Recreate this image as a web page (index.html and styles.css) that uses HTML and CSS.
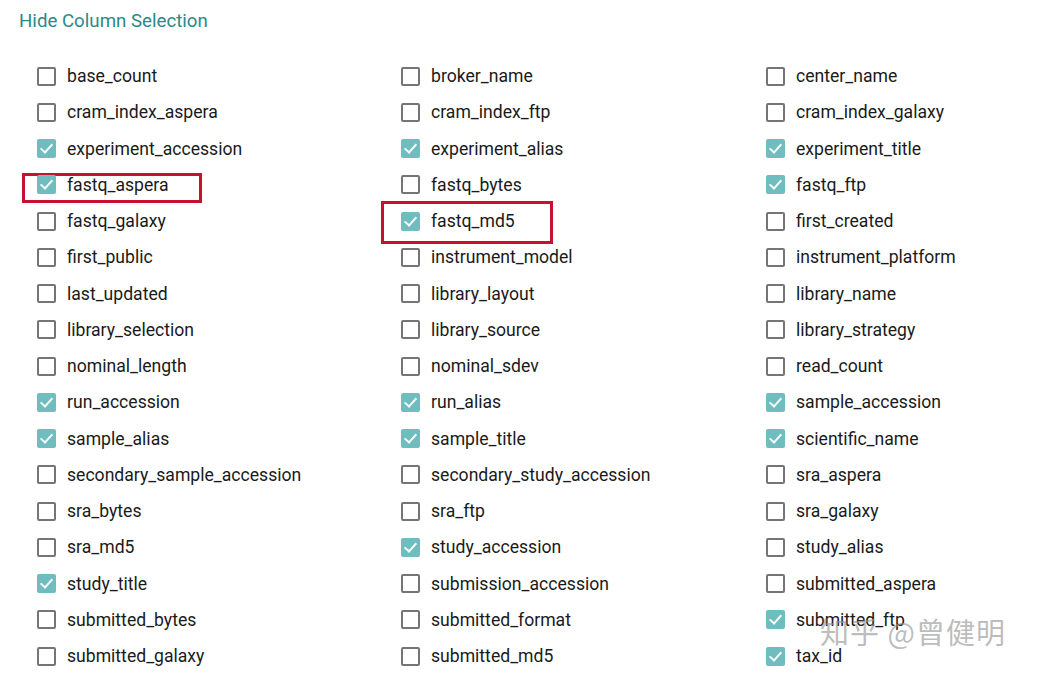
FILE: index.html
```html
<!DOCTYPE html>
<html>
<head>
<meta charset="utf-8">
<link rel="stylesheet" href="styles.css">
</head>
<body>
<div class="page">
  <a class="toggle">Hide Column Selection</a>
  <div class="grid">
    <label class="item"><span class="box"></span><span class="lbl">base_count</span></label>
    <label class="item"><span class="box"></span><span class="lbl">broker_name</span></label>
    <label class="item"><span class="box"></span><span class="lbl">center_name</span></label>

    <label class="item"><span class="box"></span><span class="lbl">cram_index_aspera</span></label>
    <label class="item"><span class="box"></span><span class="lbl">cram_index_ftp</span></label>
    <label class="item"><span class="box"></span><span class="lbl">cram_index_galaxy</span></label>

    <label class="item"><span class="box on"></span><span class="lbl">experiment_accession</span></label>
    <label class="item"><span class="box on"></span><span class="lbl">experiment_alias</span></label>
    <label class="item"><span class="box on"></span><span class="lbl">experiment_title</span></label>

    <label class="item"><span class="mark m1"></span><span class="box on"></span><span class="lbl">fastq_aspera</span></label>
    <label class="item"><span class="box"></span><span class="lbl">fastq_bytes</span></label>
    <label class="item"><span class="box on"></span><span class="lbl">fastq_ftp</span></label>

    <label class="item"><span class="box"></span><span class="lbl">fastq_galaxy</span></label>
    <label class="item"><span class="mark m2"></span><span class="box on"></span><span class="lbl">fastq_md5</span></label>
    <label class="item"><span class="box"></span><span class="lbl">first_created</span></label>

    <label class="item"><span class="box"></span><span class="lbl">first_public</span></label>
    <label class="item"><span class="box"></span><span class="lbl">instrument_model</span></label>
    <label class="item"><span class="box"></span><span class="lbl">instrument_platform</span></label>

    <label class="item"><span class="box"></span><span class="lbl">last_updated</span></label>
    <label class="item"><span class="box"></span><span class="lbl">library_layout</span></label>
    <label class="item"><span class="box"></span><span class="lbl">library_name</span></label>

    <label class="item"><span class="box"></span><span class="lbl">library_selection</span></label>
    <label class="item"><span class="box"></span><span class="lbl">library_source</span></label>
    <label class="item"><span class="box"></span><span class="lbl">library_strategy</span></label>

    <label class="item"><span class="box"></span><span class="lbl">nominal_length</span></label>
    <label class="item"><span class="box"></span><span class="lbl">nominal_sdev</span></label>
    <label class="item"><span class="box"></span><span class="lbl">read_count</span></label>

    <label class="item"><span class="box on"></span><span class="lbl">run_accession</span></label>
    <label class="item"><span class="box on"></span><span class="lbl">run_alias</span></label>
    <label class="item"><span class="box on"></span><span class="lbl">sample_accession</span></label>

    <label class="item"><span class="box on"></span><span class="lbl">sample_alias</span></label>
    <label class="item"><span class="box on"></span><span class="lbl">sample_title</span></label>
    <label class="item"><span class="box on"></span><span class="lbl">scientific_name</span></label>

    <label class="item"><span class="box"></span><span class="lbl">secondary_sample_accession</span></label>
    <label class="item"><span class="box"></span><span class="lbl">secondary_study_accession</span></label>
    <label class="item"><span class="box"></span><span class="lbl">sra_aspera</span></label>

    <label class="item"><span class="box"></span><span class="lbl">sra_bytes</span></label>
    <label class="item"><span class="box"></span><span class="lbl">sra_ftp</span></label>
    <label class="item"><span class="box"></span><span class="lbl">sra_galaxy</span></label>

    <label class="item"><span class="box"></span><span class="lbl">sra_md5</span></label>
    <label class="item"><span class="box on"></span><span class="lbl">study_accession</span></label>
    <label class="item"><span class="box"></span><span class="lbl">study_alias</span></label>

    <label class="item"><span class="box on"></span><span class="lbl">study_title</span></label>
    <label class="item"><span class="box"></span><span class="lbl">submission_accession</span></label>
    <label class="item"><span class="box"></span><span class="lbl">submitted_aspera</span></label>

    <label class="item"><span class="box"></span><span class="lbl">submitted_bytes</span></label>
    <label class="item"><span class="box"></span><span class="lbl">submitted_format</span></label>
    <label class="item"><span class="box on"></span><span class="lbl">submitted_ftp</span></label>

    <label class="item"><span class="box"></span><span class="lbl">submitted_galaxy</span></label>
    <label class="item"><span class="box"></span><span class="lbl">submitted_md5</span></label>
    <label class="item"><span class="box on"></span><span class="lbl">tax_id</span></label>
  </div>
  <div class="watermark">知乎 @曾健明</div>
</div>
</body>
</html>
```
FILE: styles.css
```css
html, body {
  margin: 0;
  padding: 0;
  background: #ffffff;
}
.page {
  position: relative;
  width: 1040px;
  height: 673px;
  overflow: hidden;
  font-family: Roboto, "Liberation Sans", sans-serif;
}
.toggle {
  display: block;
  padding: 10px 0 0 19px;
  height: 48px;
  box-sizing: border-box;
  font-size: 18.7px;
  line-height: 22px;
  color: #2b8a86;
}
.grid {
  display: grid;
  grid-template-columns: 364px 365px 1fr;
  grid-auto-rows: 36.25px;
  padding-left: 37px;
  margin-top: 10px;
}
.item {
  position: relative;
  display: flex;
  align-items: center;
  gap: 11px;
  font-size: 17.6px;
  color: #1a1a1a;
}
.box {
  flex: none;
  width: 19px;
  height: 19px;
  box-sizing: border-box;
  border: 2px solid #757575;
  border-radius: 2px;
  position: relative;
}
.box.on {
  border: none;
  background: #6fbdbf;
}
.box.on::after {
  content: "";
  position: absolute;
  left: 6px;
  top: 2px;
  width: 5px;
  height: 10px;
  border-right: 2px solid #ffffff;
  border-bottom: 2px solid #ffffff;
  transform: rotate(42deg);
  opacity: 0.95;
}
.mark {
  position: absolute;
  box-sizing: border-box;
  border: 3px solid #c41230;
}
.mark.m1 {
  left: -15px;
  top: 6px;
  width: 180px;
  height: 30px;
}
.mark.m2 {
  left: -20px;
  top: -2px;
  width: 172px;
  height: 43px;
}
.watermark {
  position: absolute;
  left: 820px;
  top: 610px;
  font-family: "Noto Sans CJK SC", sans-serif;
  font-size: 29px;
  color: rgba(150, 150, 150, 0.65);
  letter-spacing: 1px;
}
```
